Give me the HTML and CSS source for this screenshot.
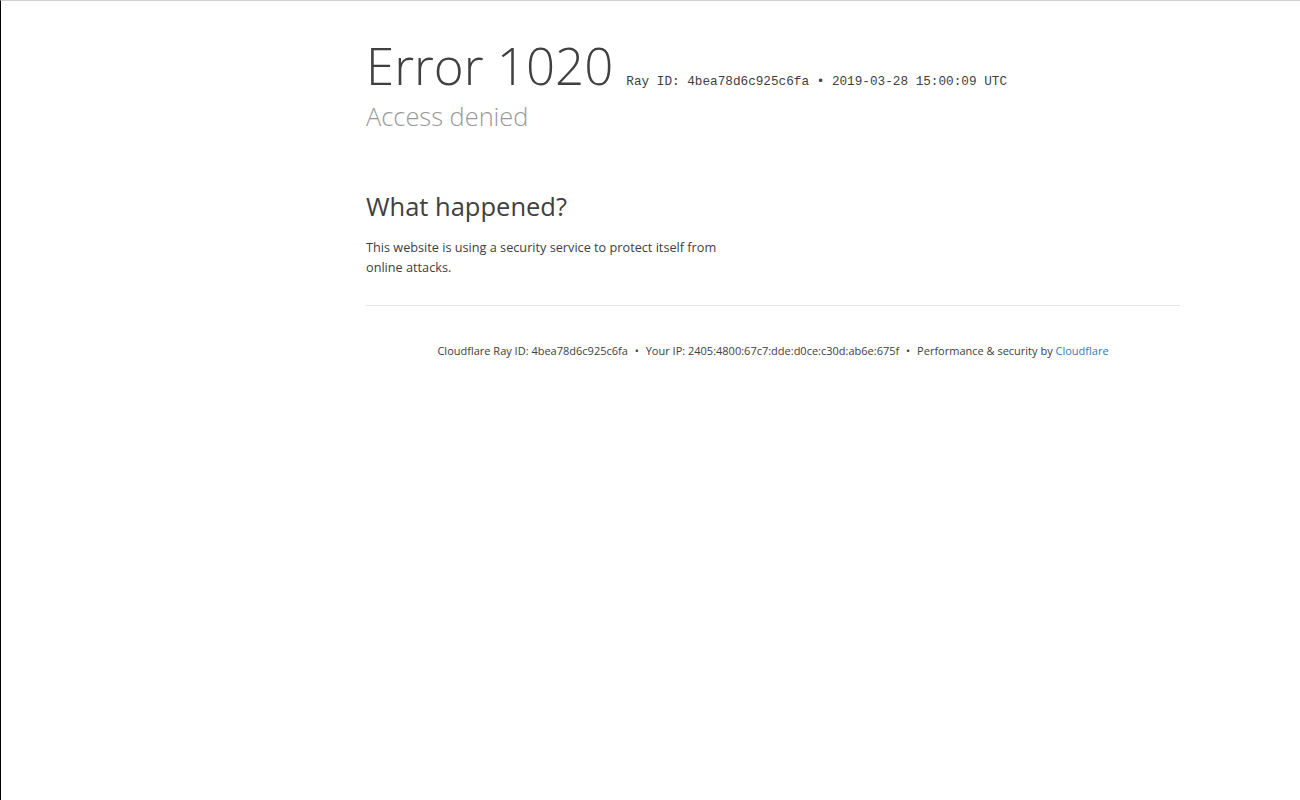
FILE: index.html
```html
<!DOCTYPE html>
<html lang="en">
<head>
<meta charset="utf-8">
<title>Access denied | Cloudflare</title>
<link rel="stylesheet" href="styles.css">
</head>
<body>
<div class="page">
  <div class="wrapper">
    <header class="header">
      <h1 class="title"><span class="code">Error 1020</span><span class="ray">Ray ID: 4bea78d6c925c6fa &bull; 2019-03-28 15:00:09 UTC</span></h1>
      <h2 class="subtitle">Access denied</h2>
    </header>
    <section class="section">
      <h2 class="section-title">What happened?</h2>
      <p class="section-text">This website is using a security service to protect itself from online attacks.</p>
    </section>
    <footer class="footer">
      <p class="footer-text">
        <span>Cloudflare Ray ID: 4bea78d6c925c6fa</span>
        <span class="sep">&bull;</span>
        <span>Your IP: 2405:4800:67c7:dde:d0ce:c30d:ab6e:675f</span>
        <span class="sep">&bull;</span>
        <span>Performance &amp; security by <a class="link" href="#">Cloudflare</a></span>
      </p>
    </footer>
  </div>
</div>
</body>
</html>
```

FILE: styles.css
```css
html, body {
  margin: 0;
  padding: 0;
  background: #fff;
}
.page {
  box-sizing: border-box;
  height: 800px;
  border-left: 1px solid #000;
  border-top: 1px solid #cfcfcf;
  font-family: "Open Sans", "Liberation Sans", sans-serif;
  color: #404040;
  padding-left: 365px;
}
.wrapper {
  width: 814px;
  padding-top: 38px;
}
.header {
  margin: 0;
}
.title {
  margin: 0;
  font-weight: 300;
  font-size: 51px;
  line-height: 52px;
  color: #404040;
  display: flex;
  align-items: baseline;
  gap: 13px;
}
.ray {
  font-family: "Liberation Mono", "Courier New", monospace;
  font-size: 12.7px;
  font-weight: 400;
  color: #404040;
}
.subtitle {
  margin: -7px 0 0;
  font-weight: 300;
  font-size: 25.4px;
  line-height: 30px;
  color: #999;
}
.section {
  margin-top: 58px;
  width: 360px;
}
.section-title {
  margin: 0;
  font-weight: 400;
  font-size: 25.5px;
  line-height: 34px;
  color: #404040;
}
.section-text {
  margin: 14px 0 0;
  font-size: 12.7px;
  line-height: 20px;
}
.footer {
  margin-top: 28px;
  border-top: 1px solid #e6e6e6;
  padding-top: 37px;
  text-align: center;
}
.footer-text {
  margin: 0;
  font-size: 11px;
  line-height: 16px;
  color: #404040;
}
.sep {
  margin: 0 4px;
}
.link {
  color: #2f7bbf;
  text-decoration: none;
}
```
